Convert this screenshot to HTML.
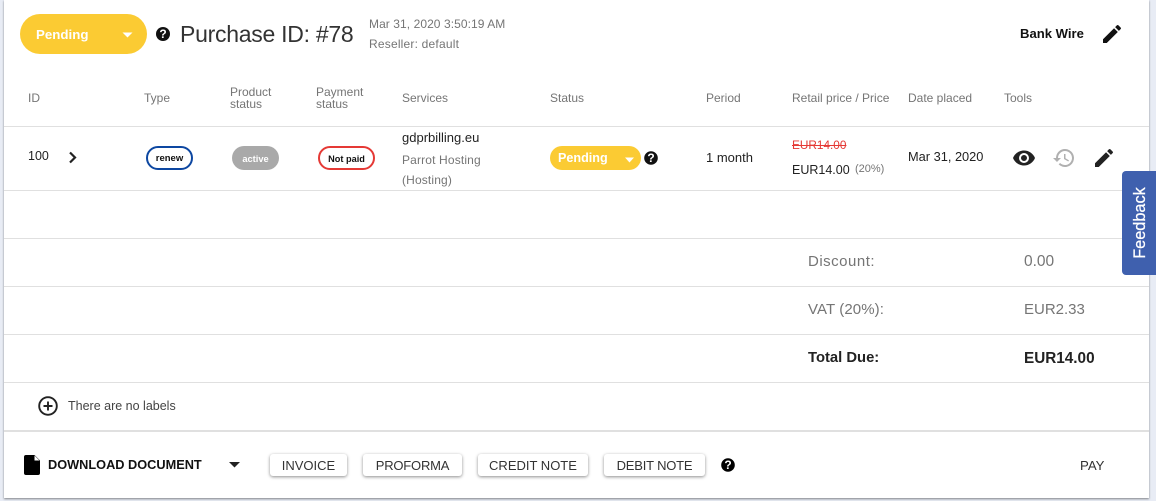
<!DOCTYPE html>
<html><head><meta charset="utf-8">
<style>
html,body{margin:0;padding:0;width:1156px;height:501px;overflow:hidden;background:#e8ecf5;font-family:"Liberation Sans",sans-serif;}
#card{position:absolute;left:4px;top:0;width:1145px;height:498px;background:#fff;box-shadow:0 1px 2px rgba(0,0,0,.45);}
.t{position:absolute;white-space:nowrap;line-height:1;}
.hr{position:absolute;left:4px;width:1145px;height:1px;background:#e0e0e0;}
.h{font-size:12px;color:#757575;line-height:12px;}
.b{position:absolute;background:#fff;border-radius:3px;box-shadow:0 1px 3px rgba(0,0,0,.45);height:22px;top:454px;text-align:center;font-size:13px;line-height:23px;color:#333;}
svg{position:absolute;}
</style></head><body>
<div id="card"></div>

<!-- header -->
<div style="position:absolute;left:20px;top:14px;width:127px;height:40px;border-radius:20px;background:#fbcb33;"></div>
<div class="t" style="left:36px;top:28px;font-size:13.3px;font-weight:bold;color:#fff;">Pending</div>
<svg style="left:122px;top:32px" width="11" height="6"><path d="M0.5 0.5h10L5.5 5.5z" fill="#fff"/></svg>
<svg style="left:156px;top:27px" width="14" height="14" viewBox="0 0 14 14"><circle cx="7" cy="7" r="7" fill="#111"/><text x="7" y="11.2" font-size="12" font-weight="bold" fill="#fff" text-anchor="middle" font-family="Liberation Sans">?</text></svg>
<div class="t" style="left:180px;top:23px;font-size:23px;color:#333;letter-spacing:-.27px;">Purchase ID: #78</div>
<div class="t" style="left:369px;top:18px;font-size:12px;color:#757575;letter-spacing:.07px;">Mar 31, 2020 3:50:19 AM</div>
<div class="t" style="left:369px;top:38px;font-size:12px;color:#757575;letter-spacing:.2px;">Reseller: default</div>
<div class="t" style="left:1020px;top:27px;font-size:13.1px;font-weight:bold;color:#111;">Bank Wire</div>
<svg style="left:1100px;top:22px" width="24" height="24" viewBox="0 0 24 24"><path d="M3 17.25V21h3.75L17.81 9.94l-3.75-3.75L3 17.25zM20.71 7.04a1 1 0 0 0 0-1.41l-2.34-2.34a1 1 0 0 0-1.41 0l-1.83 1.83 3.75 3.75 1.83-1.83z" fill="#111"/></svg>

<!-- table head -->
<div class="t h" style="left:28px;top:92px;">ID</div>
<div class="t h" style="left:144px;top:92px;">Type</div>
<div class="t h" style="left:230px;top:86px;">Product<br>status</div>
<div class="t h" style="left:316px;top:86px;">Payment<br>status</div>
<div class="t h" style="left:402px;top:92px;">Services</div>
<div class="t h" style="left:550px;top:92px;">Status</div>
<div class="t h" style="left:706px;top:92px;">Period</div>
<div class="t h" style="left:792px;top:92px;">Retail price / Price</div>
<div class="t h" style="left:908px;top:92px;">Date placed</div>
<div class="t h" style="left:1004px;top:92px;">Tools</div>
<div class="hr" style="top:126px"></div>

<!-- row -->
<div class="t" style="left:28px;top:150px;font-size:12.5px;color:#222;">100</div>
<svg style="left:68px;top:151px" width="10" height="13" viewBox="0 0 10 13"><path d="M2 1.5l5 5-5 5" fill="none" stroke="#222" stroke-width="2.2"/></svg>
<div style="position:absolute;left:146px;top:146px;width:47px;height:24px;box-sizing:border-box;border:2px solid #0d47a1;border-radius:12px;background:#fff;text-align:center;font-size:9.5px;font-weight:bold;line-height:22px;color:#111;">renew</div>
<div style="position:absolute;left:232px;top:146px;width:47px;height:24px;border-radius:12px;background:#a9a9a9;text-align:center;font-size:9.3px;font-weight:bold;line-height:26px;color:#fff;">active</div>
<div style="position:absolute;left:318px;top:146px;width:57px;height:24px;box-sizing:border-box;border:2px solid #e53935;border-radius:12px;background:#fff;text-align:center;font-size:9.2px;font-weight:bold;line-height:22px;color:#111;">Not paid</div>
<div class="t" style="left:402px;top:131px;font-size:13px;color:#222;">gdprbilling.eu</div>
<div class="t" style="left:402px;top:154px;font-size:12px;color:#757575;letter-spacing:.15px;">Parrot Hosting</div>
<div class="t" style="left:402px;top:174px;font-size:12px;color:#757575;letter-spacing:.15px;">(Hosting)</div>
<div style="position:absolute;left:550px;top:146px;width:91px;height:24px;border-radius:12px;background:#fbcb33;"></div>
<div class="t" style="left:558px;top:152px;font-size:12.6px;font-weight:bold;color:#fff;">Pending</div>
<svg style="left:624px;top:157px" width="11" height="6"><path d="M1 .5h9L5.5 5.5z" fill="#fff"/></svg>
<svg style="left:644px;top:151px" width="14" height="14" viewBox="0 0 14 14"><circle cx="7" cy="7" r="6.8" fill="#111"/><text x="7" y="11.2" font-size="12" font-weight="bold" fill="#fff" text-anchor="middle" font-family="Liberation Sans">?</text></svg>
<div class="t" style="left:706px;top:151px;font-size:13px;color:#222;">1 month</div>
<div class="t" style="left:792px;top:140px;font-size:11.8px;color:#e53935;text-decoration:line-through;">EUR14.00</div>
<div class="t" style="left:792px;top:164px;font-size:12.5px;color:#222;">EUR14.00</div>
<div class="t" style="left:855px;top:164px;font-size:11px;color:#757575;">(20%)</div>
<div class="t" style="left:908px;top:151px;font-size:12.8px;color:#222;">Mar 31, 2020</div>
<svg style="left:1012px;top:146px" width="24" height="24" viewBox="0 0 24 24"><path d="M12 4.5C7 4.5 2.73 7.61 1 12c1.73 4.39 6 7.5 11 7.5s9.27-3.11 11-7.5c-1.73-4.39-6-7.5-11-7.5zM12 17a5 5 0 1 1 0-10 5 5 0 0 1 0 10zm0-8a3 3 0 1 0 0 6 3 3 0 0 0 0-6z" fill="#222"/></svg>
<svg style="left:1052px;top:146px" width="24" height="24" viewBox="0 0 24 24"><path d="M13 3a9 9 0 0 0-9 9H1l3.89 3.89.07.14L9 12H6a7 7 0 1 1 2.05 4.95l-1.42 1.42A9 9 0 1 0 13 3zm-1 5v5l4.28 2.54.72-1.21-3.5-2.08V8H12z" fill="#b0b0b0"/></svg>
<svg style="left:1092px;top:146px" width="24" height="24" viewBox="0 0 24 24"><path d="M3 17.25V21h3.75L17.81 9.94l-3.75-3.75L3 17.25zM20.71 7.04a1 1 0 0 0 0-1.41l-2.34-2.34a1 1 0 0 0-1.41 0l-1.83 1.83 3.75 3.75 1.83-1.83z" fill="#222"/></svg>
<div class="hr" style="top:190px"></div>
<div class="hr" style="top:238px"></div>
<div class="hr" style="top:286px"></div>
<div class="hr" style="top:334px"></div>
<div class="hr" style="top:382px"></div>

<!-- totals -->
<div class="t" style="left:808px;top:254px;font-size:15px;letter-spacing:.5px;color:#757575;">Discount:</div>
<div class="t" style="left:1024px;top:254px;font-size:15.5px;color:#757575;">0.00</div>
<div class="t" style="left:808px;top:302px;font-size:15px;letter-spacing:.1px;color:#757575;">VAT (20%):</div>
<div class="t" style="left:1024px;top:302px;font-size:15px;color:#757575;">EUR2.33</div>
<div class="t" style="left:808px;top:351px;font-size:14.8px;font-weight:bold;color:#222;">Total Due:</div>
<div class="t" style="left:1024px;top:351px;font-size:15.3px;font-weight:bold;color:#222;">EUR14.00</div>

<!-- labels -->
<svg style="left:38px;top:396px" width="20" height="20" viewBox="0 0 20 20"><circle cx="10" cy="10" r="8.8" fill="none" stroke="#222" stroke-width="1.9"/><path d="M10 5.5v9M5.5 10h9" stroke="#222" stroke-width="1.9"/></svg>
<div class="t" style="left:68px;top:400px;font-size:12.5px;color:#444;">There are no labels</div>
<div class="hr" style="top:430px;height:2px;"></div>

<!-- footer -->
<svg style="left:24px;top:455px" width="16" height="20" viewBox="0 0 16 20"><path d="M2 0h8.5L16 5.5V18a2 2 0 0 1-2 2H2a2 2 0 0 1-2-2V2a2 2 0 0 1 2-2z" fill="#000"/><path d="M10.5 .5v5h5z" fill="#fff"/></svg>
<div class="t" style="left:48px;top:459px;font-size:12.75px;font-weight:bold;color:#111;">DOWNLOAD DOCUMENT</div>
<svg style="left:229px;top:462px" width="11" height="6"><path d="M0 0h11L5.5 5.5z" fill="#222"/></svg>
<div class="b" style="left:270px;width:77px;">INVOICE</div>
<div class="b" style="left:363px;width:99px;letter-spacing:-.2px;">PROFORMA</div>
<div class="b" style="left:478px;width:110px;">CREDIT NOTE</div>
<div class="b" style="left:604px;width:101px;letter-spacing:-.2px;">DEBIT NOTE</div>
<svg style="left:721px;top:458px" width="14" height="14" viewBox="0 0 14 14"><circle cx="7" cy="7" r="6.8" fill="#000"/><text x="7" y="11.2" font-size="12" font-weight="bold" fill="#fff" text-anchor="middle" font-family="Liberation Sans">?</text></svg>
<div class="t" style="left:1080px;top:459px;font-size:13.2px;color:#333;">PAY</div>

<!-- feedback -->
<div style="position:absolute;left:1122px;top:171px;width:34px;height:104px;background:#3f60ae;border-radius:4px 0 0 4px;"></div>
<div class="t" style="left:1140px;top:223px;font-size:16.3px;color:#fff;-webkit-text-stroke:.25px #fff;transform:translate(-50%,-50%) rotate(-90deg);">Feedback</div>
</body></html>
